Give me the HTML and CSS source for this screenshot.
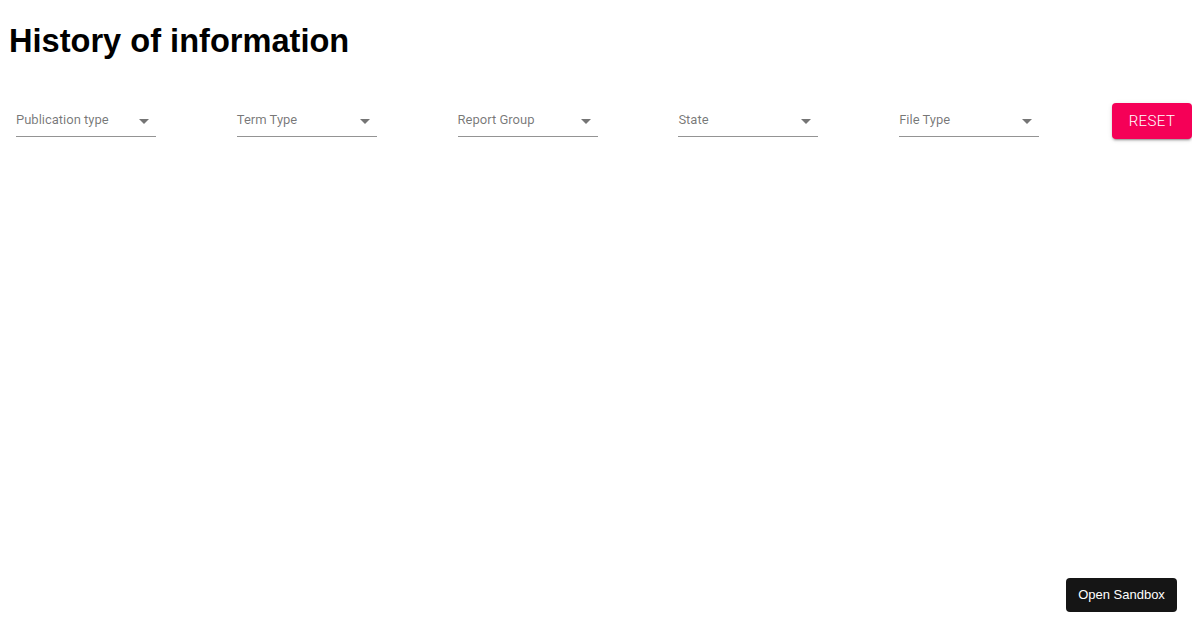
FILE: index.html
```html
<!DOCTYPE html>
<html>
<head>
<meta charset="utf-8">
<link rel="stylesheet" href="styles.css">
</head>
<body>
<h1 class="title">History of information</h1>
<div class="filters">
  <div class="field"><div class="select"><span class="label">Publication type</span><svg class="arrow" width="10" height="5" viewBox="0 0 10 5"><path d="M0 0h10L5 5z"/></svg></div></div>
  <div class="field"><div class="select"><span class="label">Term Type</span><svg class="arrow" width="10" height="5" viewBox="0 0 10 5"><path d="M0 0h10L5 5z"/></svg></div></div>
  <div class="field"><div class="select"><span class="label">Report Group</span><svg class="arrow" width="10" height="5" viewBox="0 0 10 5"><path d="M0 0h10L5 5z"/></svg></div></div>
  <div class="field"><div class="select"><span class="label">State</span><svg class="arrow" width="10" height="5" viewBox="0 0 10 5"><path d="M0 0h10L5 5z"/></svg></div></div>
  <div class="field"><div class="select"><span class="label">File Type</span><svg class="arrow" width="10" height="5" viewBox="0 0 10 5"><path d="M0 0h10L5 5z"/></svg></div></div>
  <button class="reset">RESET</button>
</div>
<button class="sandbox">Open Sandbox</button>
</body>
</html>
```
FILE: styles.css
```css
html, body {
  background: #fff;
}
body {
  margin: 8px;
  font-family: Roboto, "Liberation Sans", sans-serif;
}
.title {
  font-family: "Liberation Sans", Arial, sans-serif;
  font-weight: bold;
  font-size: 32.6px;
  margin: 14px 0 22px 1px;
  line-height: 37px;
  color: #000;
}
.filters {
  display: flex;
  justify-content: space-between;
  align-items: flex-start;
}
.field {
  width: 140px;
  height: 48px;
  margin: 8px;
  display: flex;
  flex-direction: column;
  justify-content: flex-end;
}
.select {
  height: 31px;
  border-bottom: 1px solid rgba(0, 0, 0, 0.42);
  display: flex;
  align-items: center;
  justify-content: space-between;
  padding-right: 7px;
}
.label {
  font-size: 13px;
  color: rgba(0, 0, 0, 0.54);
  padding-bottom: 3px;
}
.arrow {
  fill: rgba(0, 0, 0, 0.54);
  display: block;
  margin-top: 2px;
}
.reset {
  margin-top: 22px;
  width: 80px;
  height: 36px;
  background: #f50057;
  color: #fff;
  border: none;
  border-radius: 4px;
  font-family: Roboto, sans-serif;
  font-size: 15px;
  font-weight: 300;
  letter-spacing: 0.4px;
  box-shadow: 0 3px 1px -2px rgba(0,0,0,0.2), 0 2px 2px 0 rgba(0,0,0,0.14), 0 1px 5px 0 rgba(0,0,0,0.12);
  padding: 0 0 1px;
}
.sandbox {
  position: fixed;
  right: 23px;
  bottom: 18px;
  width: 111px;
  height: 34px;
  background: #151515;
  color: #fff;
  border: none;
  border-radius: 4px;
  font-family: "Liberation Sans", Arial, sans-serif;
  font-size: 13px;
  padding: 0 0 2px;
}
```
